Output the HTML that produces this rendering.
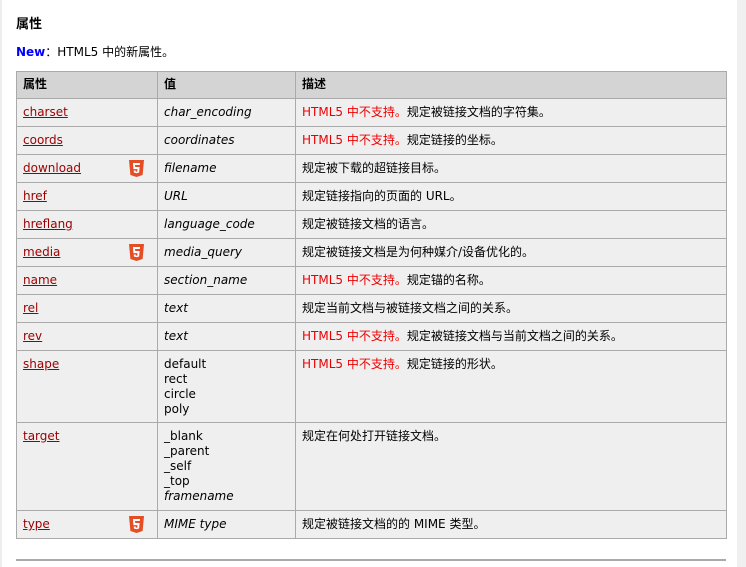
<!DOCTYPE html>
<html><head><meta charset="utf-8"><style>
body{margin:0;width:746px;height:567px;background:#fff;position:relative;overflow:hidden;font-family:"DejaVu Sans","Noto Sans CJK SC",sans-serif;font-size:12px;color:#000}
.lstrip{position:absolute;left:0;top:0;width:2px;height:567px;background:#eee}
.rstrip{position:absolute;left:737px;top:0;width:9px;height:567px;background:#f0f0f0}
h2{position:absolute;left:16px;top:13px;margin:0;font-size:13px;font-weight:bold}
.new{position:absolute;left:16px;top:43px;font-size:12px}
.new b{color:#00f}
table{position:absolute;left:16px;top:71px;border-collapse:collapse;width:711px;background:#efefef}
th,td{border:1px solid #aaa;padding:0 6px;text-align:left;vertical-align:top;height:27px;line-height:15px;padding-top:6px;box-sizing:border-box;position:relative}
th{background:#d4d4d4;font-weight:bold;height:27px;padding-top:5px}
a{color:#900;text-decoration:underline}
i{font-style:italic}
.r{color:#e00}
svg.h5{position:absolute;left:112px;top:5px}
hr{position:absolute;left:16px;top:559px;width:710px;margin:0;border:0;height:2px;background:#aaa}
</style></head><body>
<div class="lstrip"></div><div class="rstrip"></div>
<h2>属性</h2>
<div class="new"><b>New</b>：HTML5 中的新属性。</div>
<table>
<colgroup><col style="width:141px"><col style="width:138px"><col></colgroup>
<tr><th>属性</th><th>值</th><th>描述</th></tr>
<tr style="height:28px"><td><a>charset</a></td><td><i>char_encoding</i></td><td><span class="r">HTML5 中不支持。</span>规定被链接文档的字符集。</td></tr>
<tr style="height:28px"><td><a>coords</a></td><td><i>coordinates</i></td><td><span class="r">HTML5 中不支持。</span>规定链接的坐标。</td></tr>
<tr style="height:28px"><td><a>download</a><svg class="h5" width="15" height="17" viewBox="0 0 15 17"><path d="M0 0h15l-1.4 15L7.5 17 1.4 15z" fill="#e44d26"/><path d="M4 3h7l-.2 2H6l.2 2h4.4l-.5 5.5-2.6.8-2.6-.8-.2-2h2l.1 1 .7.2.8-.2.2-2.4H4.4z" fill="#fff"/></svg></td><td><i>filename</i></td><td>规定被下载的超链接目标。</td></tr>
<tr style="height:28px"><td><a>href</a></td><td><i>URL</i></td><td>规定链接指向的页面的 URL。</td></tr>
<tr style="height:28px"><td><a>hreflang</a></td><td><i>language_code</i></td><td>规定被链接文档的语言。</td></tr>
<tr style="height:28px"><td><a>media</a><svg class="h5" width="15" height="17" viewBox="0 0 15 17"><path d="M0 0h15l-1.4 15L7.5 17 1.4 15z" fill="#e44d26"/><path d="M4 3h7l-.2 2H6l.2 2h4.4l-.5 5.5-2.6.8-2.6-.8-.2-2h2l.1 1 .7.2.8-.2.2-2.4H4.4z" fill="#fff"/></svg></td><td><i>media_query</i></td><td>规定被链接文档是为何种媒介/设备优化的。</td></tr>
<tr style="height:28px"><td><a>name</a></td><td><i>section_name</i></td><td><span class="r">HTML5 中不支持。</span>规定锚的名称。</td></tr>
<tr style="height:28px"><td><a>rel</a></td><td><i>text</i></td><td>规定当前文档与被链接文档之间的关系。</td></tr>
<tr style="height:28px"><td><a>rev</a></td><td><i>text</i></td><td><span class="r">HTML5 中不支持。</span>规定被链接文档与当前文档之间的关系。</td></tr>
<tr style="height:72px"><td><a>shape</a></td><td>default<br>rect<br>circle<br>poly</td><td><span class="r">HTML5 中不支持。</span>规定链接的形状。</td></tr>
<tr style="height:88px"><td><a>target</a></td><td>_blank<br>_parent<br>_self<br>_top<br><i>framename</i></td><td>规定在何处打开链接文档。</td></tr>
<tr style="height:28px"><td><a>type</a><svg class="h5" width="15" height="17" viewBox="0 0 15 17"><path d="M0 0h15l-1.4 15L7.5 17 1.4 15z" fill="#e44d26"/><path d="M4 3h7l-.2 2H6l.2 2h4.4l-.5 5.5-2.6.8-2.6-.8-.2-2h2l.1 1 .7.2.8-.2.2-2.4H4.4z" fill="#fff"/></svg></td><td><i>MIME type</i></td><td>规定被链接文档的的 MIME 类型。</td></tr>
</table>
<hr>
</body></html>
